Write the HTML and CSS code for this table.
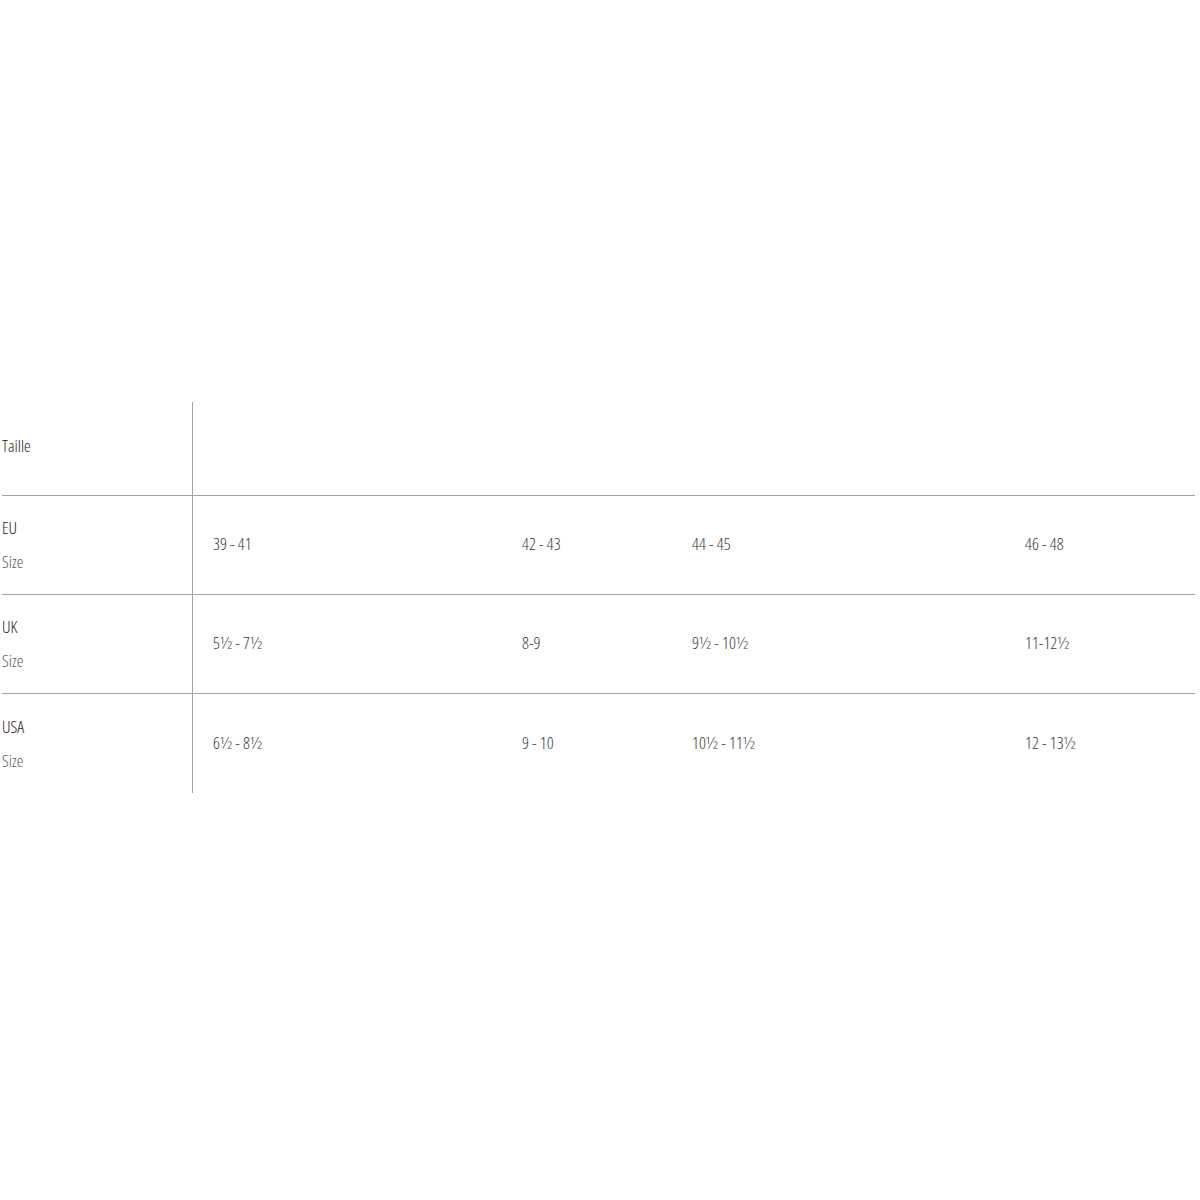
FILE: index.html
```html
<!DOCTYPE html>
<html lang="fr">
<head>
<meta charset="utf-8">
<title>Taille</title>
<link rel="stylesheet" href="styles.css">
</head>
<body>
<div class="page">
  <div class="size-table">
    <div class="row head">
      <div class="label"><span class="name">Taille</span></div>
      <div class="cell"></div>
    </div>
    <div class="row">
      <div class="label"><span class="name">EU</span><span class="sub">Size</span></div>
      <div class="cell">39 - 41</div>
      <div class="cell">42 - 43</div>
      <div class="cell">44 - 45</div>
      <div class="cell">46 - 48</div>
    </div>
    <div class="row">
      <div class="label"><span class="name">UK</span><span class="sub">Size</span></div>
      <div class="cell">5½ - 7½</div>
      <div class="cell">8-9</div>
      <div class="cell">9½ - 10½</div>
      <div class="cell">11-12½</div>
    </div>
    <div class="row last">
      <div class="label"><span class="name">USA</span><span class="sub">Size</span></div>
      <div class="cell">6½ - 8½</div>
      <div class="cell">9 - 10</div>
      <div class="cell">10½ - 11½</div>
      <div class="cell">12 - 13½</div>
    </div>
  </div>
</div>
</body>
</html>
```

FILE: styles.css
```css
html, body {
  margin: 0;
  padding: 0;
  background: #ffffff;
}
.page {
  padding: 402px 5px 0 2px;
  font-family: "Open Sans", "DejaVu Sans Condensed", sans-serif;
  font-stretch: 75%;
}
.size-table {
  width: 1193px;
}
.row {
  display: grid;
  grid-template-columns: 191px 309px 170px 333px 190px;
  height: 99px;
  border-bottom: 1px solid #a3a3a3;
  box-sizing: border-box;
}
.row.head {
  height: 94px;
  grid-template-columns: 191px 1fr;
}
.row.head .label {
  padding-bottom: 6px;
}
.row.last {
  border-bottom: none;
}
.label {
  display: flex;
  flex-direction: column;
  justify-content: center;
  gap: 12px;
  border-right: 1px solid #a3a3a3;
}
.name {
  font-size: 17px;
  line-height: 22px;
  color: #222222;
  font-weight: 350;
}
.sub {
  font-size: 17px;
  line-height: 22px;
  color: #5a5a5a;
  font-weight: 300;
}
.cell {
  display: flex;
  align-items: center;
  padding-left: 20px;
  padding-bottom: 3px;
  font-size: 17px;
  font-weight: 300;
  color: #3a3a3a;
}
```
